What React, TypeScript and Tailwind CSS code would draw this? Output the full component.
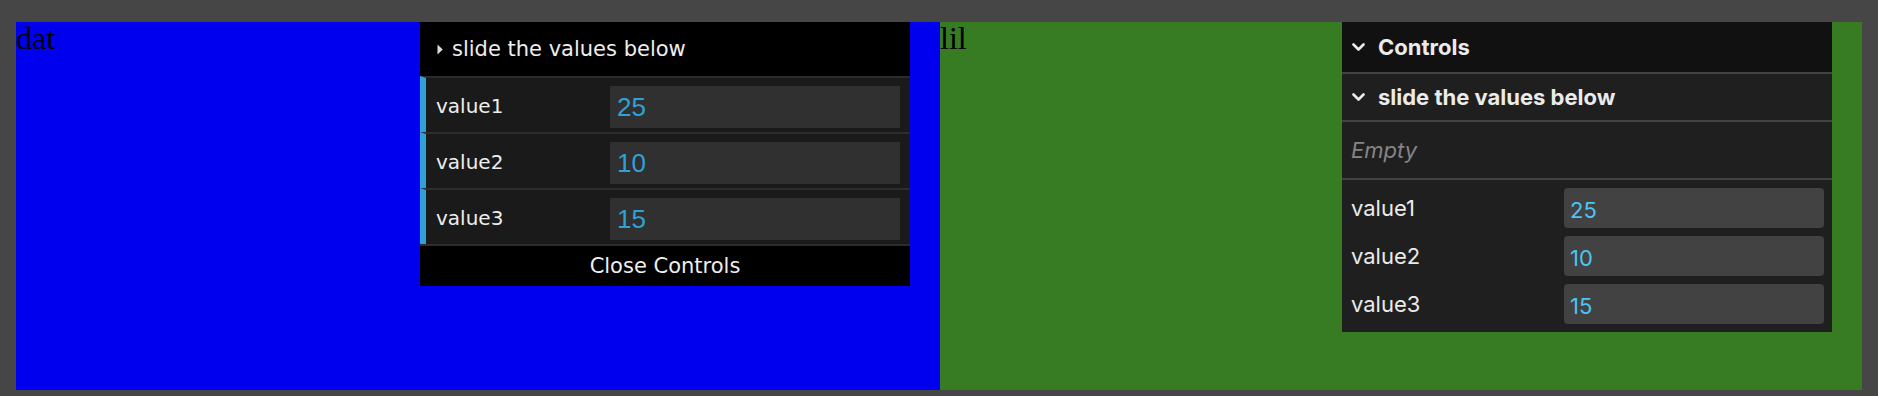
import React from "react";

const rows = [
  { name: "value1", value: "25" },
  { name: "value2", value: "10" },
  { name: "value3", value: "15" },
];

function Chevron() {
  return (
    <svg width="13" height="9" viewBox="0 0 13 9" className="shrink-0">
      <polyline points="1.5,1.5 6.5,6.5 11.5,1.5" fill="none" stroke="#ebebeb" strokeWidth="2.6" strokeLinecap="round" strokeLinejoin="round" />
    </svg>
  );
}

function DatPanel() {
  return (
    <div className="ml-auto mr-[30px] w-[490px] font-['DejaVu_Sans',sans-serif] text-[#eeeeee]">
      <div className="flex h-[54px] items-center bg-black pl-[17px]">
        <svg width="6" height="11" viewBox="0 0 6 11" className="shrink-0">
          <path d="M0.5 0.5 L5.8 5.5 L0.5 10.5 Z" fill="#dddddd" />
        </svg>
        <span className="ml-[9px] text-[21px] leading-none">slide the values below</span>
      </div>
      {rows.map((r) => (
        <div
          key={r.name}
          className="flex h-[56px] items-start border-t-2 border-l-[6px] border-t-[#2c2c2c] border-l-[#2fa1d6] bg-[#1a1a1a] pl-[10px]"
        >
          <span className="w-[174px] self-center pt-[2px] text-[20px] leading-none">{r.name}</span>
          <div className="mt-[8px] flex h-[42px] w-[290px] items-center bg-[#303030] pl-[7px] font-['Liberation_Sans',sans-serif] text-[26px] leading-none text-[#2fa1d6]">
            {r.value}
          </div>
        </div>
      ))}
      <div className="flex h-[42px] items-center justify-center border-t-2 border-[#2c2c2c] bg-black text-[21px] leading-none">
        Close Controls
      </div>
    </div>
  );
}

function LilPanel() {
  return (
    <div className="ml-auto mr-[30px] w-[490px] bg-[#1f1f1f] font-['Inter',sans-serif] text-[#ebebeb]">
      <div className="flex h-[50px] items-center bg-[#111111] pl-[10px] text-[22px] font-bold">
        <Chevron />
        <span className="ml-[13px] leading-none">Controls</span>
      </div>
      <div className="flex h-[50px] items-center border-y-2 border-[#424242] pl-[10px] text-[22px] font-bold">
        <Chevron />
        <span className="ml-[13px] leading-none">slide the values below</span>
      </div>
      <div className="my-[8px] flex h-[40px] items-center pl-[9px] text-[22px] italic text-[#858585]">Empty</div>
      <div className="flex flex-col gap-[8px] border-t-2 border-[#424242] p-[8px]">
        {rows.map((r) => (
          <div key={r.name} className="flex h-[40px] items-center">
            <span className="w-[214px] pl-[1px] text-[22px] leading-none">{r.name}</span>
            <div className="flex h-[40px] flex-1 items-center rounded-[4px] bg-[#424242] pl-[6px] pt-[3px] text-[22px] leading-none text-[#4cc4f4]">
              {r.value}
            </div>
          </div>
        ))}
      </div>
    </div>
  );
}

export default function App() {
  return (
    <div className="flex h-[396px] w-[1878px] bg-[#464646] pb-[6px] pl-[16px] pr-[16px] pt-[22px]">
      <div className="flex h-[368px] w-[924px] items-start bg-[#0000ee]">
        <span className="font-['Liberation_Serif',serif] text-[32px] leading-[33px] text-black">dat</span>
        <DatPanel />
      </div>
      <div className="flex h-[368px] flex-1 items-start bg-[#377c23]">
        <span className="font-['Liberation_Serif',serif] text-[32px] leading-[33px] text-black">lil</span>
        <LilPanel />
      </div>
    </div>
  );
}
